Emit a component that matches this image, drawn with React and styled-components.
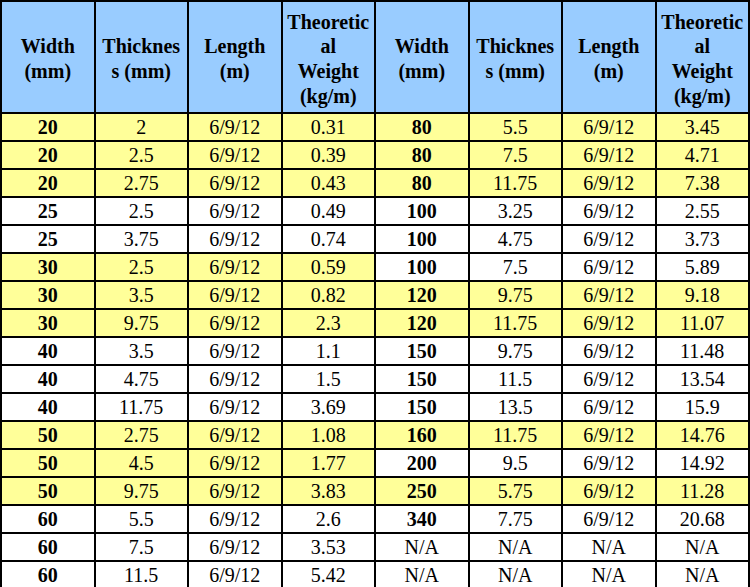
import React from 'react';
import styled, { createGlobalStyle } from 'styled-components';

const blue = '#99ccff';
const yellow = '#ffff99';

const GlobalStyle = createGlobalStyle`
    body {
        margin: 0;
        font-family: 'Liberation Serif', serif;
    }
`

const left = [
    ['20', '2', '0.31', 1], ['20', '2.5', '0.39', 1], ['20', '2.75', '0.43', 1],
    ['25', '2.5', '0.49', 0], ['25', '3.75', '0.74', 0],
    ['30', '2.5', '0.59', 1], ['30', '3.5', '0.82', 1], ['30', '9.75', '2.3', 1],
    ['40', '3.5', '1.1', 0], ['40', '4.75', '1.5', 0], ['40', '11.75', '3.69', 0],
    ['50', '2.75', '1.08', 1], ['50', '4.5', '1.77', 1], ['50', '9.75', '3.83', 1],
    ['60', '5.5', '2.6', 0], ['60', '7.5', '3.53', 0], ['60', '11.5', '5.42', 0],
]

const right = [
    ['80', '5.5', '3.45', 1], ['80', '7.5', '4.71', 1], ['80', '11.75', '7.38', 1],
    ['100', '3.25', '2.55', 0], ['100', '4.75', '3.73', 0], ['100', '7.5', '5.89', 0],
    ['120', '9.75', '9.18', 1], ['120', '11.75', '11.07', 1],
    ['150', '9.75', '11.48', 0], ['150', '11.5', '13.54', 0], ['150', '13.5', '15.9', 0],
    ['160', '11.75', '14.76', 1], ['200', '9.5', '14.92', 0], ['250', '5.75', '11.28', 1],
    ['340', '7.75', '20.68', 0], [null, null, null, 0], [null, null, null, 0],
]

const headers = [
    ['Width', '(mm)'],
    ['Thicknes', 's (mm)'],
    ['Length', '(m)'],
    ['Theoretic', 'al', 'Weight', '(kg/m)'],
]

const Half = ({ row }) => {
    const [w, t, kg, hl] = row;
    if (w === null) {
        return (
            <>
                <Cell>N/A</Cell>
                <Cell>N/A</Cell>
                <Cell>N/A</Cell>
                <Cell>N/A</Cell>
            </>
        )
    }
    return (
        <>
            <Cell $hl={hl} $bold>{w}</Cell>
            <Cell $hl={hl}>{t}</Cell>
            <Cell $hl={hl}>6/9/12</Cell>
            <Cell $hl={hl}>{kg}</Cell>
        </>
    )
}

const App = () => {
    const heads = [...headers, ...headers];
    return (
        <>
            <GlobalStyle />
            <Table>
                <thead>
                    <HeadRow>
                        {heads.map((lines, i) => (
                            <HeadCell key={i}>
                                {lines.map((l, j) => (
                                    <React.Fragment key={j}>
                                        {j > 0 && <br />}
                                        {l}
                                    </React.Fragment>
                                ))}
                            </HeadCell>
                        ))}
                    </HeadRow>
                </thead>
                <tbody>
                    {left.map((row, i) => (
                        <Row key={i}>
                            <Half row={row} />
                            <Half row={right[i]} />
                        </Row>
                    ))}
                </tbody>
            </Table>
        </>
    )
}

const Table = styled.table`
    width: 750px;
    table-layout: fixed;
    border-collapse: collapse;
    color: #000000;
`
const HeadRow = styled.tr`
    height: 112px;
`
const HeadCell = styled.th`
    background: ${blue};
    border: 2px solid #000000;
    font-family: 'Liberation Serif', serif;
    font-size: 20px;
    font-weight: 700;
    line-height: 24.7px;
    padding: 4px 0 0;
    text-align: center;
    vertical-align: middle;
`
const Row = styled.tr`
    height: 28px;
`
const Cell = styled.td`
    background: ${(p) => (p.$hl ? yellow : '#ffffff')};
    border: 2px solid #000000;
    font-family: 'Liberation Serif', serif;
    font-size: 20px;
    font-weight: ${(p) => (p.$bold ? 700 : 400)};
    line-height: 22px;
    padding: 0;
    text-align: center;
    vertical-align: middle;
`

export default App;
